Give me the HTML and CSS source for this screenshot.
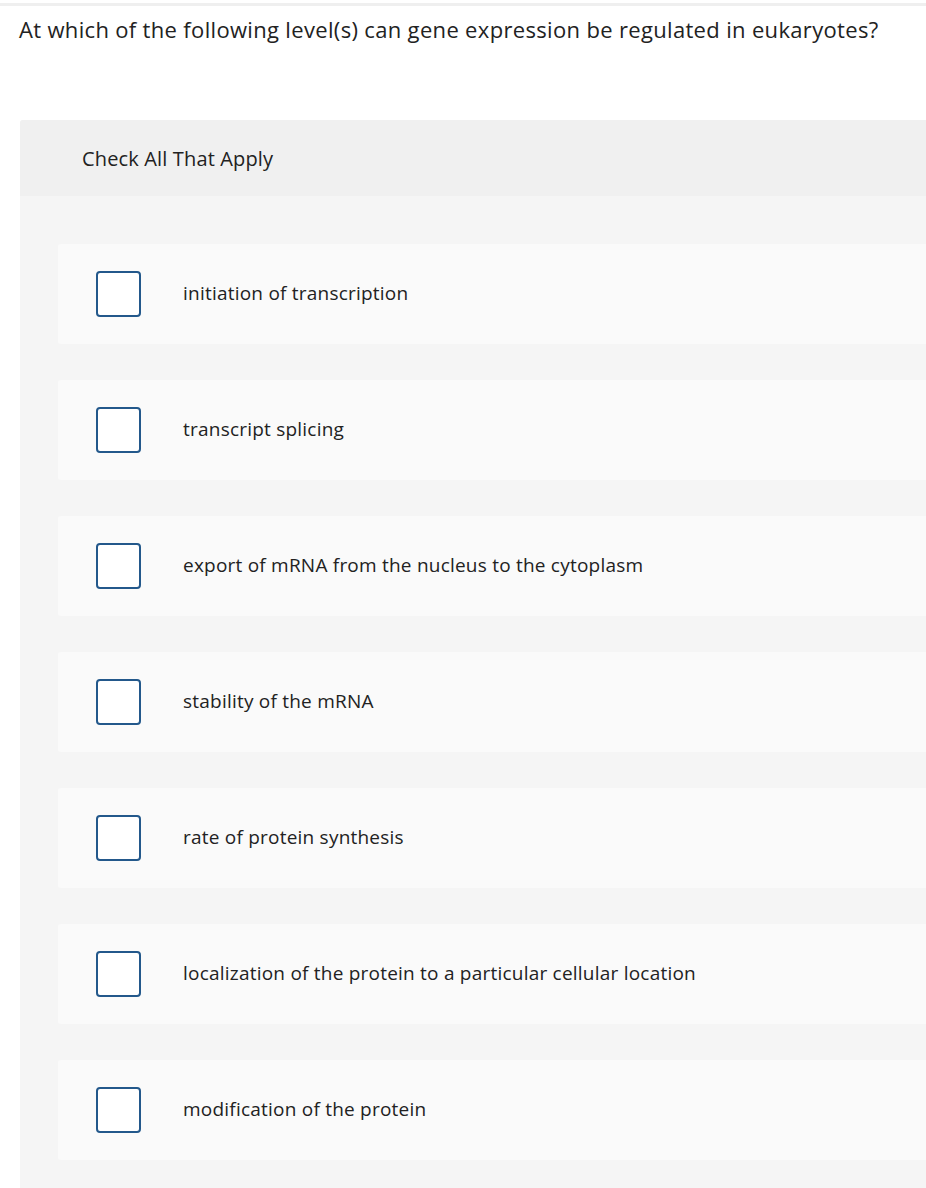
FILE: index.html
```html
<!DOCTYPE html>
<html>
<head>
<meta charset="utf-8">
<link rel="stylesheet" href="styles.css">
</head>
<body>
<div class="topline"></div>
<h1 class="question">At which of the following level(s) can gene expression be regulated in eukaryotes?</h1>
<div class="panel">
  <div class="panel-head">Check All That Apply</div>
  <div class="panel-body">
    <div class="option"><span class="box"></span><span class="label">initiation of transcription</span></div>
    <div class="option"><span class="box"></span><span class="label">transcript splicing</span></div>
    <div class="option"><span class="box"></span><span class="label">export of mRNA from the nucleus to the cytoplasm</span></div>
    <div class="option"><span class="box"></span><span class="label">stability of the mRNA</span></div>
    <div class="option"><span class="box"></span><span class="label">rate of protein synthesis</span></div>
    <div class="option"><span class="box"></span><span class="label">localization of the protein to a particular cellular location</span></div>
    <div class="option"><span class="box"></span><span class="label">modification of the protein</span></div>
  </div>
</div>
</body>
</html>
```
FILE: styles.css
```css
html, body {
  margin: 0;
  padding: 0;
  overflow: hidden;
  background: #ffffff;
}
body {
  font-family: "Open Sans", "Liberation Sans", sans-serif;
  color: #222222;
  padding-top: 3px;
}
.topline {
  height: 3px;
  background: #efefef;
}
.question {
  margin: 0;
  padding: 9px 0 0 19px;
  height: 114px;
  box-sizing: border-box;
  font-size: 22px;
  font-weight: 400;
  letter-spacing: 0.33px;
  line-height: 28px;
  white-space: nowrap;
}
.panel {
  margin-left: 20px;
  width: 960px;
  border-radius: 3px 0 0 0;
  background: #f5f5f5;
}
.panel-head {
  height: 76px;
  background: #f0f0f0;
  border-radius: 3px 0 0 0;
  padding-left: 62px;
  display: flex;
  align-items: center;
  font-size: 20px;
  letter-spacing: 0.15px;
}
.panel-body {
  padding: 48px 0 28px 38px;
  display: flex;
  flex-direction: column;
  gap: 36px;
}
.option {
  height: 100px;
  background: #fafafa;
  border-radius: 3px 0 0 3px;
  display: flex;
  align-items: center;
  padding-left: 38px;
}
.box {
  width: 41px;
  height: 42px;
  border: 2px solid #23588b;
  border-radius: 4px;
  background: #ffffff;
  flex: none;
}
.label {
  margin-left: 42px;
  padding-bottom: 2px;
  font-size: 19px;
  letter-spacing: 0.22px;
}
```
